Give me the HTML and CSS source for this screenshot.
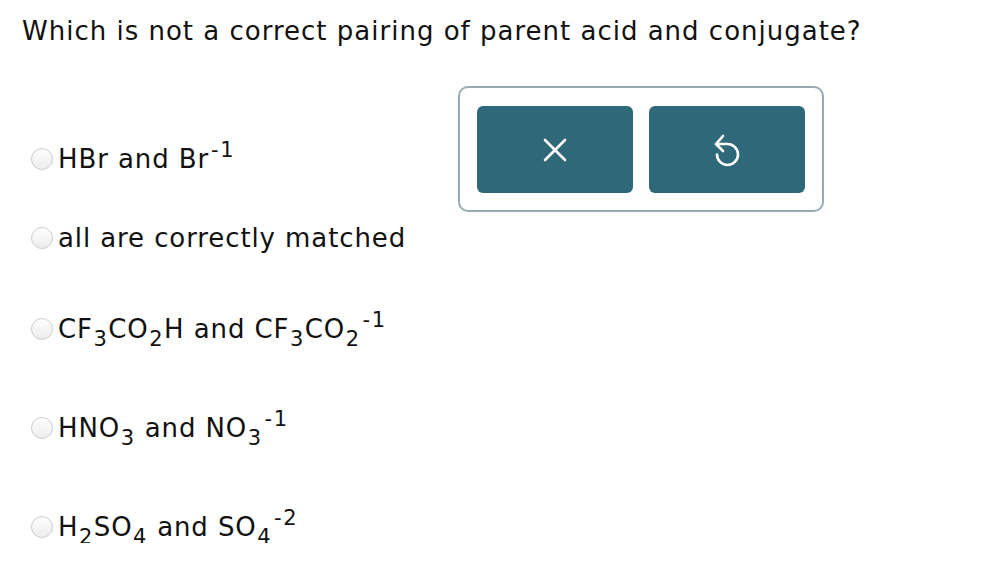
FILE: index.html
```html
<!DOCTYPE html>
<html>
<head>
<meta charset="utf-8">
<link rel="stylesheet" href="styles.css">
</head>
<body>
<div class="page">
  <div class="question">Which is not a correct pairing of parent acid and conjugate?</div>
  <div class="main">
    <div class="options">
      <label class="option o1"><span class="radio"></span><span class="txt">HBr and Br<sup>-1</sup></span></label>
      <label class="option o2"><span class="radio"></span><span class="txt">all are correctly matched</span></label>
      <label class="option o3"><span class="radio"></span><span class="txt">CF<sub>3</sub>CO<sub>2</sub>H and CF<sub>3</sub>CO<sub>2</sub><sup>-1</sup></span></label>
      <label class="option o4"><span class="radio"></span><span class="txt">HNO<sub>3</sub> and NO<sub>3</sub><sup>-1</sup></span></label>
      <label class="option o5"><span class="radio"></span><span class="txt">H<sub>2</sub>SO<sub>4</sub> and SO<sub>4</sub><sup>-2</sup></span></label>
    </div>
    <div class="toolbox">
      <button class="btn" aria-label="Clear">
        <svg width="26" height="26" viewBox="0 0 26 26"><path d="M3 3 L23 23 M23 3 L3 23" stroke="#fff" stroke-width="2.6" stroke-linecap="round" fill="none"/></svg>
      </button>
      <button class="btn" aria-label="Reset">
        <svg width="30" height="34" viewBox="0 0 30 34"><path d="M11 3 L4 11 L11 18" stroke="#fff" stroke-width="2.6" stroke-linecap="round" stroke-linejoin="round" fill="none"/><path d="M4 11 H15.5 A10.5 10.5 0 1 1 5 21.5" stroke="#fff" stroke-width="2.6" stroke-linecap="round" fill="none"/></svg>
      </button>
    </div>
  </div>
</div>
</body>
</html>
```
FILE: styles.css
```css
html, body {
  margin: 0;
  padding: 0;
  background: #fff;
}
body {
  font-family: "DejaVu Sans", Verdana, sans-serif;
  color: #111;
}
.page {
  padding: 16px 0 0 22px;
}
.question {
  font-size: 26px;
  line-height: 31px;
  letter-spacing: 1px;
}
.main {
  display: flex;
  align-items: flex-start;
  margin-top: 39px;
}
.options {
  width: 436px;
  box-sizing: border-box;
  display: flex;
  flex-direction: column;
  padding-top: 57px;
  padding-left: 9px;
}
.option {
  display: flex;
  align-items: center;
  font-size: 26px;
  line-height: 32px;
  height: 32px;
  letter-spacing: 0.9px;
}
.o2 { margin-top: 47px; }
.o3 { margin-top: 59px; }
.o4 { margin-top: 67px; }
.o5 { margin-top: 67px; }
.radio {
  width: 22px;
  height: 22px;
  border-radius: 50%;
  border: 1px solid #cdcdcd;
  background: linear-gradient(#fefefe, #ededed);
  margin-right: 5px;
  flex: none;
  box-sizing: border-box;
}
.txt sup {
  font-size: 21px;
  vertical-align: 11px;
  line-height: 0;
  letter-spacing: 1.5px;
  margin-left: 2px;
}
.txt sub {
  font-size: 21px;
  vertical-align: -8px;
  line-height: 0;
  letter-spacing: 1.5px;
  margin-left: 0.5px;
}
.toolbox {
  display: flex;
  gap: 16px;
  padding: 18px 17px 17px;
  border: 2px solid #98aab3;
  border-radius: 10px;
}
.btn {
  width: 156px;
  height: 87px;
  border: none;
  border-radius: 6px;
  background: #2e6879;
  display: flex;
  align-items: center;
  justify-content: center;
  padding: 0;
}
```
